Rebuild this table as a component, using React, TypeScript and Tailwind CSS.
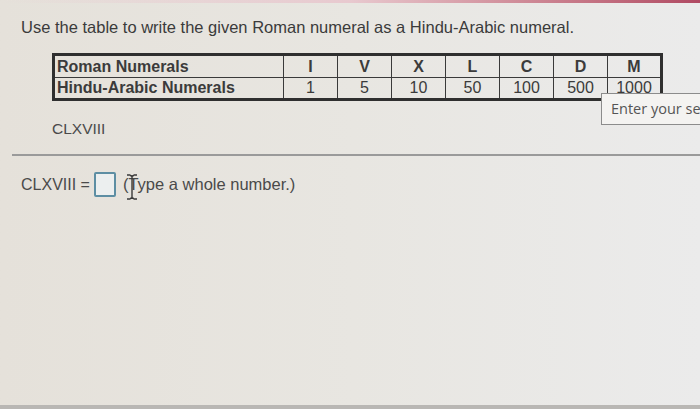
import React from 'react';

const numerals = [
  { roman: 'I', value: '1' },
  { roman: 'V', value: '5' },
  { roman: 'X', value: '10' },
  { roman: 'L', value: '50' },
  { roman: 'C', value: '100' },
  { roman: 'D', value: '500' },
  { roman: 'M', value: '1000' },
];

const IBeam = () => (
  <svg width="12" height="26" viewBox="0 0 12 26" className="absolute left-[3px] top-[2px]">
    <path d="M1 1h3.5M7.5 1H11M6 2v22M1 25h3.5M7.5 25H11M4 1.5q2 0 2 1.5q0-1.5 2-1.5M4 24.5q2 0 2-1.5q0 1.5 2 1.5" stroke="#3a3a3a" strokeWidth="1.4" fill="none" />
  </svg>
);

const App = () => {
  return (
    <div className="relative h-[409px] w-[700px] overflow-hidden bg-gradient-to-r from-[#e5e1da] via-[#e8e6e1] to-[#ebebeb] font-['Liberation_Sans',Arial,sans-serif] text-[#3b3b3b]">
      <div className="h-[3px] w-full bg-gradient-to-r from-transparent via-[#e8c9cf] to-[#b04a63]" />

      <div className="pl-[21px] pt-[14px] text-[16.5px] leading-[20px]">
        Use the table to write the given Roman numeral as a Hindu-Arabic numeral.
      </div>

      <div className="relative ml-[52px] mt-[16px] w-[608px]">
        <table className="w-full table-fixed border-collapse border-[3px] border-[#2f2f2f] text-[16px] leading-[20px]">
          <colgroup>
            <col className="w-[230px]" />
            {numerals.map((n) => (
              <col key={n.roman} className="w-[54px]" />
            ))}
          </colgroup>
          <tbody>
            <tr className="h-[23px]">
              <td className="border-[1.5px] border-[#3a3a3a] pl-[2px] font-bold">Roman Numerals</td>
              {numerals.map((n) => (
                <td key={n.roman} className="border-[1.5px] border-[#3a3a3a] text-center font-bold">
                  {n.roman}
                </td>
              ))}
            </tr>
            <tr className="h-[22px]">
              <td className="border-[1.5px] border-[#3a3a3a] pl-[2px] font-bold">Hindu-Arabic Numerals</td>
              {numerals.map((n) => (
                <td key={n.value} className="border-[1.5px] border-[#3a3a3a] text-center">
                  {n.value}
                </td>
              ))}
            </tr>
          </tbody>
        </table>

        <div className="absolute left-[549px] top-[40px] z-10 w-[100px] border border-[#8c8c8c] bg-[#f4f3f1] py-[5px] pl-[9px] font-['Open_Sans',sans-serif] text-[14.5px] leading-[20px] whitespace-nowrap text-[#555]">
          Enter your se
        </div>
      </div>

      <div className="pl-[52px] pt-[19px] text-[15.5px] leading-[18px] text-[#4a4a4a]">CLXVIII</div>

      <div className="ml-[12px] mt-[16px] h-[2px] bg-[#9a9a9a]" />

      <div className="flex items-center pl-[21px] pt-[16px] text-[16px] text-[#4a4a4a]">
        <span>CLXVIII =</span>
        <span className="ml-[4px] h-[25px] w-[22px] rounded-[2px] border-2 border-[#5d8ea3] bg-[#ecefef]" />
        <span className="relative ml-[7px] text-[16.5px]">
          (Type a whole number.)
          <IBeam />
        </span>
      </div>

      <div className="absolute bottom-0 left-0 h-[4px] w-full bg-[#b9b7b4]" />
    </div>
  );
};

export default App;
